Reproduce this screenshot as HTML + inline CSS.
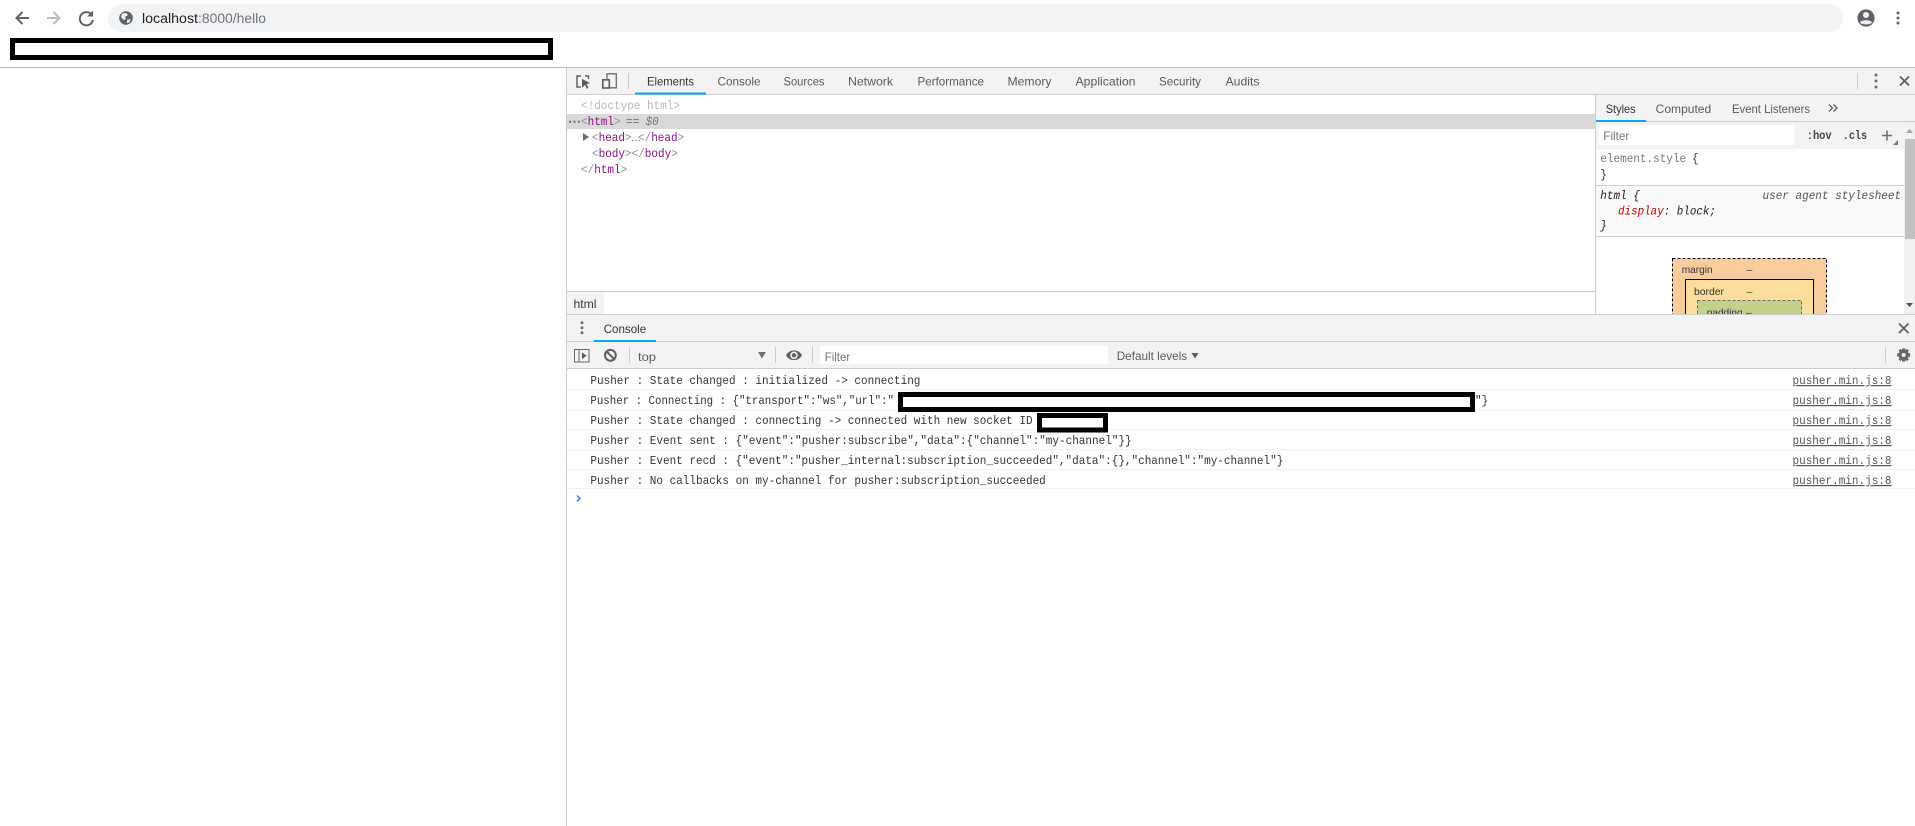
<!DOCTYPE html>
<html><head><meta charset="utf-8"><title>localhost:8000/hello</title>
<style>
html,body{margin:0;padding:0;background:#fff;overflow:hidden}
svg{display:block}
text{white-space:pre}
.s{font-family:"Liberation Sans",sans-serif;font-size:12px;fill:#333}
.t{font-family:"Liberation Sans",sans-serif;font-size:12px;fill:#5a5a5a}
.m{font-family:"Liberation Mono",monospace;font-size:12px;fill:#333}
.g{fill:#9a8a98}.p{fill:#881280}
</style></head><body>
<svg width="1915" height="826" viewBox="0 0 1915 826" xmlns="http://www.w3.org/2000/svg">
<rect width="1915" height="826" fill="#fff"/>
<!-- browser bar -->
<g fill="none" stroke-width="2">
<path d="M29 18H17M22.500 12L16.500 18L22.500 24" stroke="#5f6368"/>
<path d="M47 18H59M53.500 12L59.500 18L53.500 24" stroke="#b9bbbe"/>
<path d="M91.500 14.500A6.600 6.600 0 1 0 92.900 20" stroke="#5f6368"/>
</g>
<path d="M93 10.500V16.500H87Z" fill="#5f6368"/>
<rect x="108" y="4" width="1735" height="28" rx="14" fill="#f1f3f4"/>
<circle cx="126" cy="18" r="6.800" fill="#5f6368"/>
<path d="M122 13.500L126 13L128 15L125 17L126 19L123.500 20L121 17ZM127 20L130.500 19L129.500 22.500L127 23Z" fill="#f1f3f4"/>
<text x="142" y="23" font-family="Liberation Sans,sans-serif" font-size="13.500" fill="#202124" textLength="56" lengthAdjust="spacingAndGlyphs">localhost</text>
<text x="198" y="23" font-family="Liberation Sans,sans-serif" font-size="13.500" fill="#70757a" textLength="68" lengthAdjust="spacingAndGlyphs">:8000/hello</text>
<circle cx="1866" cy="18" r="8.600" fill="#5f6368"/>
<circle cx="1866" cy="15" r="3" fill="#f1f3f4"/>
<path d="M1860 22.500C1861.500 19.500 1870.500 19.500 1872 22.500C1870 25 1862 25 1860 22.500Z" fill="#f1f3f4"/>
<g fill="#5f6368"><circle cx="1898" cy="13" r="1.500"/><circle cx="1898" cy="18" r="1.500"/><circle cx="1898" cy="23" r="1.500"/></g>
<rect x="12.500" y="40.500" width="538" height="17" fill="#fff" stroke="#000" stroke-width="5"/>
<rect x="0" y="67" width="1915" height="1" fill="#bcbcbc"/>

<!-- devtools frame -->
<rect x="566" y="68" width="1349" height="758" fill="#fff"/>
<rect x="566" y="67" width="1" height="759" fill="#ccc"/>

<!-- main toolbar -->
<rect x="567" y="68" width="1348" height="26" fill="#f3f3f3"/>
<rect x="567" y="94" width="1348" height="1" fill="#cdcdcd"/>
<path d="M581 76H577V87H581M585 76H588.500V79" fill="none" stroke="#5f6368" stroke-width="1.500"/>
<path d="M582 79L590 83L586.500 84.200L588.500 88L586.800 88.800L585 85L582 87.500Z" fill="#5a5a5a"/>
<path d="M607 79V73.800H616.300V87.800H609" fill="none" stroke="#6e6e6e" stroke-width="1.300"/>
<rect x="602.800" y="79.800" width="6.500" height="8.200" fill="#f3f3f3" stroke="#5f5f5f" stroke-width="1.600"/>
<rect x="628" y="73" width="1" height="16" fill="#ccc"/>
<rect x="635" y="92.500" width="71" height="2" fill="#03a9f4"/>
<text class="s" x="647" y="85.500" textLength="47" lengthAdjust="spacingAndGlyphs">Elements</text>
<text class="t" x="717.500" y="85.500" textLength="43" lengthAdjust="spacingAndGlyphs">Console</text>
<text class="t" x="783.500" y="85.500" textLength="41" lengthAdjust="spacingAndGlyphs">Sources</text>
<text class="t" x="848" y="85.500" textLength="45" lengthAdjust="spacingAndGlyphs">Network</text>
<text class="t" x="917.500" y="85.500" textLength="66.500" lengthAdjust="spacingAndGlyphs">Performance</text>
<text class="t" x="1007.500" y="85.500" textLength="44" lengthAdjust="spacingAndGlyphs">Memory</text>
<text class="t" x="1075.500" y="85.500" textLength="60" lengthAdjust="spacingAndGlyphs">Application</text>
<text class="t" x="1159" y="85.500" textLength="42" lengthAdjust="spacingAndGlyphs">Security</text>
<text class="t" x="1225.500" y="85.500" textLength="34" lengthAdjust="spacingAndGlyphs">Audits</text>
<rect x="1857" y="73" width="1" height="16" fill="#ccc"/>
<g fill="#6e6e6e"><circle cx="1876" cy="75" r="1.500"/><circle cx="1876" cy="81" r="1.500"/><circle cx="1876" cy="87" r="1.500"/></g>
<path d="M1900 76.500L1909 85.500M1909 76.500L1900 85.500" stroke="#5f5f5f" stroke-width="1.800" fill="none"/>

<!-- elements tree -->
<rect x="567" y="114" width="1028" height="15" fill="#d9d9d9"/>
<g class="m">
<text class="m" x="581" y="109" textLength="99" lengthAdjust="spacingAndGlyphs" style="fill:#b8b8b8">&lt;!doctype html&gt;</text>
<text class="m" x="568" y="125" textLength="13" lengthAdjust="spacingAndGlyphs" style="font-size:9px;fill:#666">•••</text>
<text class="m" x="581" y="125" textLength="39.600" lengthAdjust="spacingAndGlyphs"><tspan class="g">&lt;</tspan><tspan class="p">html</tspan><tspan class="g">&gt;</tspan></text>
<text class="m" x="626" y="125" textLength="13.200" lengthAdjust="spacingAndGlyphs" style="fill:#777">==</text>
<text class="m" x="645.500" y="125" textLength="13.200" lengthAdjust="spacingAndGlyphs" style="fill:#777;font-style:italic">$0</text>
<path d="M583 133L589 137L583 141Z" fill="#6e6e6e"/>
<text class="m" x="592" y="141" textLength="39.600" lengthAdjust="spacingAndGlyphs"><tspan class="g">&lt;</tspan><tspan class="p">head</tspan><tspan class="g">&gt;</tspan></text>
<text x="631" y="141" font-family="Liberation Sans,sans-serif" font-size="10" fill="#555">…</text>
<text class="m" x="638" y="141" textLength="46.200" lengthAdjust="spacingAndGlyphs"><tspan class="g">&lt;/</tspan><tspan class="p">head</tspan><tspan class="g">&gt;</tspan></text>
<text class="m" x="592" y="157" textLength="85.800" lengthAdjust="spacingAndGlyphs"><tspan class="g">&lt;</tspan><tspan class="p">body</tspan><tspan class="g">&gt;&lt;/</tspan><tspan class="p">body</tspan><tspan class="g">&gt;</tspan></text>
<text class="m" x="581" y="173" textLength="46.200" lengthAdjust="spacingAndGlyphs"><tspan class="g">&lt;/</tspan><tspan class="p">html</tspan><tspan class="g">&gt;</tspan></text>
</g>

<!-- styles sidebar -->
<rect x="1595" y="94" width="1" height="220" fill="#cdcdcd"/>
<rect x="1596" y="95" width="319" height="54" fill="#f3f3f3"/>
<rect x="1596" y="121" width="319" height="1" fill="#cdcdcd"/>
<rect x="1596" y="120" width="50" height="2" fill="#03a9f4"/>
<text class="s" x="1605.700" y="113" textLength="30" lengthAdjust="spacingAndGlyphs">Styles</text>
<text class="t" x="1655.700" y="113" textLength="55.500" lengthAdjust="spacingAndGlyphs">Computed</text>
<text class="t" x="1732" y="113" textLength="78" lengthAdjust="spacingAndGlyphs">Event Listeners</text>
<path d="M1829 104.500L1832.500 108L1829 111.500M1833.500 104.500L1837 108L1833.500 111.500" fill="none" stroke="#5a5a5a" stroke-width="1.300"/>
<rect x="1599" y="125" width="196" height="20" fill="#fff"/>
<text class="t" x="1603.300" y="140" textLength="26" lengthAdjust="spacingAndGlyphs" style="fill:#757575">Filter</text>
<text class="m" x="1806.700" y="139" textLength="25" lengthAdjust="spacingAndGlyphs" style="font-weight:bold;fill:#444">:hov</text>
<text class="m" x="1842.700" y="139" textLength="24.500" lengthAdjust="spacingAndGlyphs" style="font-weight:bold;fill:#444">.cls</text>
<path d="M1882 135.500H1892M1887 130.500V140.500" stroke="#6e6e6e" stroke-width="1.600" fill="none"/>
<path d="M1898 140V145H1893Z" fill="#777"/>

<rect x="1596" y="149" width="308" height="36" fill="#fff"/>
<rect x="1596" y="185" width="308" height="1" fill="#d0d0d0"/>
<rect x="1596" y="186" width="308" height="50" fill="#f9f9f9"/>
<rect x="1596" y="236" width="308" height="1" fill="#d0d0d0"/>
<text class="m" x="1600.300" y="162" textLength="85.800" lengthAdjust="spacingAndGlyphs" style="fill:#777">element.style</text>
<text class="m" x="1692" y="162" textLength="6.600" lengthAdjust="spacingAndGlyphs">{</text>
<text class="m" x="1600.300" y="178" textLength="6.600" lengthAdjust="spacingAndGlyphs">}</text>
<g style="font-style:italic">
<text class="m" x="1600.300" y="199" textLength="39.600" lengthAdjust="spacingAndGlyphs" style="font-style:italic;fill:#222">html {</text>
<text class="m" x="1762.500" y="199" textLength="138.600" lengthAdjust="spacingAndGlyphs" style="font-style:italic;fill:#555">user agent stylesheet</text>
<text class="m" x="1618" y="214.500" textLength="98" lengthAdjust="spacingAndGlyphs" style="font-style:italic;fill:#222"><tspan fill="#c80000">display</tspan>: block;</text>
<text class="m" x="1600.300" y="229" textLength="6.600" lengthAdjust="spacingAndGlyphs" style="font-style:italic;fill:#222">}</text>
</g>

<!-- box model -->
<rect x="1672.500" y="258.500" width="154" height="70" fill="#f9cc9d" stroke="#000" stroke-dasharray="3 2"/>
<rect x="1685.500" y="279.500" width="128" height="50" fill="#fddd9b" stroke="#000"/>
<rect x="1697.500" y="300.500" width="104" height="40" fill="#c3d08b" stroke="#666" stroke-dasharray="3 2"/>
<text x="1681.700" y="273" font-family="Liberation Sans,sans-serif" font-size="10.500" fill="#333" textLength="31" lengthAdjust="spacingAndGlyphs">margin</text>
<text x="1746.500" y="273" font-family="Liberation Sans,sans-serif" font-size="10.500" fill="#333">–</text>
<text x="1694" y="295" font-family="Liberation Sans,sans-serif" font-size="10.500" fill="#333" textLength="30" lengthAdjust="spacingAndGlyphs">border</text>
<text x="1746.500" y="295" font-family="Liberation Sans,sans-serif" font-size="10.500" fill="#333">–</text>
<text x="1706.700" y="316" font-family="Liberation Sans,sans-serif" font-size="10.500" fill="#333" textLength="36" lengthAdjust="spacingAndGlyphs">padding</text>
<text x="1746" y="316" font-family="Liberation Sans,sans-serif" font-size="10.500" fill="#333">–</text>

<!-- scrollbar -->
<rect x="1904" y="122" width="11" height="192" fill="#f1f1f1"/>
<rect x="1905" y="139" width="10" height="100" fill="#c1c1c1"/>
<path d="M1909.500 129L1913 133H1906Z" fill="#a3a3a3"/>
<path d="M1906 303H1913L1909.500 307Z" fill="#505050"/>

<!-- breadcrumb -->
<rect x="567" y="291" width="1028" height="1" fill="#cdcdcd"/>
<rect x="567" y="292" width="37" height="22" fill="#f3f3f3"/>
<text class="s" x="573.500" y="308" textLength="23" lengthAdjust="spacingAndGlyphs">html</text>

<!-- drawer header -->
<rect x="567" y="314" width="1348" height="1" fill="#cdcdcd"/>
<rect x="567" y="315" width="1348" height="26" fill="#f3f3f3"/>
<rect x="567" y="341" width="1348" height="1" fill="#cdcdcd"/>
<g fill="#6e6e6e"><circle cx="582" cy="322.700" r="1.500"/><circle cx="582" cy="327.700" r="1.500"/><circle cx="582" cy="332.700" r="1.500"/></g>
<text class="s" x="603.700" y="333" textLength="42.500" lengthAdjust="spacingAndGlyphs">Console</text>
<rect x="594" y="340" width="62" height="2" fill="#03a9f4"/>
<path d="M1899 323.500L1908.500 333M1908.500 323.500L1899 333" stroke="#5f5f5f" stroke-width="1.800" fill="none"/>

<!-- console toolbar -->
<rect x="567" y="342" width="1348" height="26" fill="#f3f3f3"/>
<rect x="567" y="368" width="1348" height="1" fill="#cdcdcd"/>
<rect x="574.500" y="349.500" width="14.500" height="12.500" fill="none" stroke="#666" stroke-width="1"/>
<rect x="578.500" y="349.500" width="1" height="12.500" fill="#666"/>
<path d="M582 352.500L586.500 355.700L582 359Z" fill="#5a5a5a"/>
<circle cx="610.400" cy="355.300" r="5.400" fill="none" stroke="#5f5f5f" stroke-width="2"/>
<path d="M606.600 351.500L614.200 359.100" stroke="#5f5f5f" stroke-width="2"/>
<rect x="629" y="347" width="1" height="16" fill="#ccc"/>
<text class="t" x="638" y="361" textLength="18" lengthAdjust="spacingAndGlyphs">top</text>
<path d="M758 352H766L762 358.500Z" fill="#6e6e6e"/>
<rect x="775" y="347" width="1" height="16" fill="#ccc"/>
<path d="M786 355.300C789.500 348.800 798.500 348.800 802 355.300C798.500 361.800 789.500 361.800 786 355.300Z" fill="#5f5f5f"/>
<circle cx="794" cy="355.300" r="3.800" fill="#f3f3f3"/><circle cx="794" cy="355.300" r="2.200" fill="#5f5f5f"/>
<rect x="812" y="347" width="1" height="16" fill="#ccc"/>
<rect x="820" y="346" width="288" height="18" fill="#fff"/>
<text class="t" x="824.700" y="361" textLength="25.500" lengthAdjust="spacingAndGlyphs" style="fill:#757575">Filter</text>
<text class="t" x="1116.700" y="360" textLength="70.500" lengthAdjust="spacingAndGlyphs">Default levels</text>
<path d="M1191.500 353H1198.500L1195 358.500Z" fill="#5f5f5f"/>
<rect x="1885" y="347" width="1" height="16" fill="#ccc"/>
<g fill="#666">
<circle cx="1903.700" cy="355" r="5.200"/>
<path d="M1902 348.500H1905.400V351H1902ZM1902 359H1905.400V361.500H1902ZM1897.300 353.300H1899.800V356.700H1897.300ZM1907.600 353.300H1910.100V356.700H1907.600ZM1898.500 350.500L1900.500 348.900L1902.200 351L1900.200 352.700ZM1905.200 351L1906.900 348.900L1908.900 350.500L1907.200 352.700ZM1898.500 359.500L1900.200 357.300L1902.200 359L1900.500 361.100ZM1905.200 359L1907.200 357.300L1908.900 359.500L1906.900 361.100Z"/>
</g>
<circle cx="1903.700" cy="355" r="2" fill="#f3f3f3"/>

<!-- console rows -->
<g fill="#f0f0f0">
<rect x="567" y="389" width="1348" height="1"/><rect x="567" y="409" width="1348" height="1"/><rect x="567" y="429" width="1348" height="1"/><rect x="567" y="449" width="1348" height="1"/><rect x="567" y="469" width="1348" height="1"/><rect x="567" y="488" width="1348" height="1"/>
</g>
<text class="m" x="590.400" y="384" textLength="330" lengthAdjust="spacingAndGlyphs">Pusher : State changed : initialized -&gt; connecting</text>
<text class="m" x="590.400" y="404" textLength="303.600" lengthAdjust="spacingAndGlyphs">Pusher : Connecting : {"transport":"ws","url":"</text>
<text class="m" x="1475" y="404" textLength="13.200" lengthAdjust="spacingAndGlyphs">"}</text>
<text class="m" x="590.400" y="424" textLength="442.200" lengthAdjust="spacingAndGlyphs">Pusher : State changed : connecting -&gt; connected with new socket ID</text>
<text class="m" x="590.400" y="444" textLength="541.200" lengthAdjust="spacingAndGlyphs">Pusher : Event sent : {"event":"pusher:subscribe","data":{"channel":"my-channel"}}</text>
<text class="m" x="590.400" y="464" textLength="692.900" lengthAdjust="spacingAndGlyphs">Pusher : Event recd : {"event":"pusher_internal:subscription_succeeded","data":{},"channel":"my-channel"}</text>
<text class="m" x="590.400" y="484" textLength="455.400" lengthAdjust="spacingAndGlyphs">Pusher : No callbacks on my-channel for pusher:subscription_succeeded</text>
<rect x="900.500" y="394.500" width="572" height="15" fill="#fff" stroke="#000" stroke-width="5"/>
<rect x="1039.500" y="415.500" width="66" height="14.500" fill="#fff" stroke="#000" stroke-width="5"/>
<g>
<text class="m" x="1792.500" y="384" textLength="99" lengthAdjust="spacingAndGlyphs" style="fill:#555;text-decoration:underline">pusher.min.js:8</text>
<text class="m" x="1792.500" y="404" textLength="99" lengthAdjust="spacingAndGlyphs" style="fill:#555;text-decoration:underline">pusher.min.js:8</text>
<text class="m" x="1792.500" y="424" textLength="99" lengthAdjust="spacingAndGlyphs" style="fill:#555;text-decoration:underline">pusher.min.js:8</text>
<text class="m" x="1792.500" y="444" textLength="99" lengthAdjust="spacingAndGlyphs" style="fill:#555;text-decoration:underline">pusher.min.js:8</text>
<text class="m" x="1792.500" y="464" textLength="99" lengthAdjust="spacingAndGlyphs" style="fill:#555;text-decoration:underline">pusher.min.js:8</text>
<text class="m" x="1792.500" y="484" textLength="99" lengthAdjust="spacingAndGlyphs" style="fill:#555;text-decoration:underline">pusher.min.js:8</text>
</g>
<path d="M577 495.500L580 498.500L577 501.500" fill="none" stroke="#367cf1" stroke-width="1.500"/>
</svg>
</body></html>
